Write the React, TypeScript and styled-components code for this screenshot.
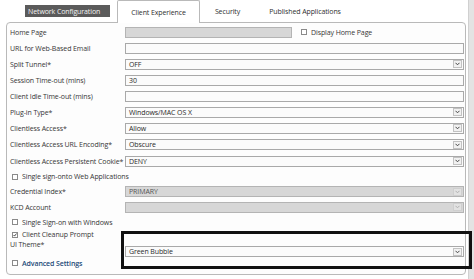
import React from "react";
import styled, { createGlobalStyle } from "styled-components";

const Global = createGlobalStyle`
  html, body { margin: 0; padding: 0; background: #ffffff; }
  body { font-family: "Open Sans", "Noto Sans", sans-serif; font-size: 7px; letter-spacing: -0.1px; color: #333; }
  * { box-sizing: border-box; }
`;

const Page = styled.div`
  position: relative;
  width: 474px;
  height: 279px;
  display: flex;
  overflow: hidden;
`;

const Main = styled.div`
  flex: 1;
  padding: 0 2px 0 6px;
  display: flex;
  flex-direction: column;
`;

const ScrollStrip = styled.div`
  width: 6px;
  background: #e3e3e3;
  border-left: 1px solid #d0d0d0;
`;

const TabBar = styled.div`
  height: 22px;
  display: flex;
  align-items: stretch;
  position: relative;
  z-index: 1;
`;

const Tab = styled.div<{ $w: number; $active?: boolean }>`
  width: ${(p) => p.$w}px;
  display: flex;
  align-items: center;
  justify-content: center;
  color: #2f2f2f;
  ${(p) =>
    p.$active
      ? `background:#ffffff;border:1px solid #b9b9b9;border-bottom:none;border-radius:2px 2px 0 0;height:23px;`
      : ``}
`;

const FirstTab = styled.div`
  width: 111px;
  padding: 5px 0 0 19px;
`;

const Highlight = styled.div`
  width: 85px;
  height: 12px;
  background: #5b5b5b;
  color: #f4f4f4;
  display: flex;
  align-items: center;
  padding-left: 3px;
`;

const Panel = styled.div`
  height: 253px;
  border: 1px solid #b9b9b9;
  border-radius: 4px;
  background: #fdfdfd;
  padding: 1px 1px 0 3px;
  display: flex;
  flex-direction: column;
`;

const Row = styled.div<{ $h: number; $top?: boolean }>`
  height: ${(p) => p.$h}px;
  display: grid;
  grid-template-columns: 115px 1fr;
  align-items: ${(p) => (p.$top ? "stretch" : "center")};
`;

const Label = styled.div<{ $top?: boolean }>`
  color: #363636;
  white-space: nowrap;
  align-self: ${(p) => (p.$top ? "start" : "center")};
`;

const Field = styled.div<{ $disabled?: boolean; $bottom?: boolean }>`
  height: 11px;
  border: 1px solid ${(p) => (p.$disabled ? "#b4b4b4" : "#a9a9a9")};
  background: ${(p) => (p.$disabled ? "#d7d7d7" : "#fbfbfb")};
  display: flex;
  align-items: center;
  padding-left: 3px;
  white-space: nowrap;
  ${(p) => (p.$bottom ? "align-self: end; margin-bottom: 1px;" : "")}
`;

const FieldText = styled.span<{ $disabled?: boolean }>`
  flex: 1;
  color: ${(p) => (p.$disabled ? "#555" : "#2a2a2a")};
`;

const ArrowBox = styled.div<{ $disabled?: boolean }>`
  width: 9px;
  height: 8px;
  margin-right: 1px;
  border: 1px solid ${(p) => (p.$disabled ? "#cfcfcf" : "#c2c2c2")};
  background: ${(p) => (p.$disabled ? "#e2e2e2" : "#f1f1f1")};
  display: flex;
  align-items: center;
  justify-content: center;
`;

const HomeWrap = styled.div`
  display: flex;
  align-items: center;
`;

const HomeField = styled(Field)`
  width: 167px;
  margin-right: 9px;
`;

const CheckRow = styled.div<{ $h: number }>`
  height: ${(p) => p.$h}px;
  display: flex;
  align-items: center;
  padding-left: 2px;
`;

const Box = styled.div`
  width: 6px;
  height: 6px;
  border: 1px solid #8a8a8a;
  background: #fff;
  margin-right: 4px;
  display: flex;
  align-items: center;
  justify-content: center;
`;

const CheckText = styled.span<{ $link?: boolean }>`
  color: ${(p) => (p.$link ? "#1c4a78" : "#363636")};
  font-weight: ${(p) => (p.$link ? 600 : 400)};
  white-space: nowrap;
`;

const InlineCheck = styled.div`
  display: flex;
  align-items: center;
`;

const Annotation = styled.div`
  position: absolute;
  left: 121px;
  top: 231px;
  width: 351px;
  height: 38px;
  border: 3px solid #111;
  pointer-events: none;
`;

const Chevron = ({ disabled }: { disabled?: boolean }) => (
  <svg width="5" height="4" viewBox="0 0 5 4">
    <path d="M0.5 0.8 L2.5 2.8 L4.5 0.8" fill="none" stroke={disabled ? "#b0b0b0" : "#444"} strokeWidth="1" />
  </svg>
);

const Check = () => (
  <svg width="6" height="6" viewBox="0 0 6 6">
    <path d="M0.8 3 L2.3 4.6 L5.3 0.8" fill="none" stroke="#222" strokeWidth="1.2" />
  </svg>
);

const Select = ({ value, disabled, bottom }: { value: string; disabled?: boolean; bottom?: boolean }) => (
  <Field $disabled={disabled} $bottom={bottom}>
    <FieldText $disabled={disabled}>{value}</FieldText>
    <ArrowBox $disabled={disabled}>
      <Chevron disabled={disabled} />
    </ArrowBox>
  </Field>
);

const Input = ({ value }: { value?: string }) => (
  <Field>
    <FieldText>{value}</FieldText>
  </Field>
);

export default function App() {
  return (
    <>
      <Global />
      <Page>
        <Main>
          <TabBar>
            <FirstTab>
              <Highlight>Network Configuration</Highlight>
            </FirstTab>
            <Tab $w={83} $active>
              Client Experience
            </Tab>
            <Tab $w={55}>Security</Tab>
            <Tab $w={100}>Published Applications</Tab>
          </TabBar>
          <Panel>
            <Row $h={16}>
              <Label>Home Page</Label>
              <HomeWrap>
                <HomeField $disabled />
                <InlineCheck>
                  <Box />
                  <CheckText>Display Home Page</CheckText>
                </InlineCheck>
              </HomeWrap>
            </Row>
            <Row $h={16}>
              <Label>URL for Web-Based Email</Label>
              <Input />
            </Row>
            <Row $h={16}>
              <Label>Split Tunnel*</Label>
              <Select value="OFF" />
            </Row>
            <Row $h={16}>
              <Label>Session Time-out (mins)</Label>
              <Input value="30" />
            </Row>
            <Row $h={16}>
              <Label>Client Idle Time-out (mins)</Label>
              <Input />
            </Row>
            <Row $h={16}>
              <Label>Plug-in Type*</Label>
              <Select value="Windows/MAC OS X" />
            </Row>
            <Row $h={16}>
              <Label>Clientless Access*</Label>
              <Select value="Allow" />
            </Row>
            <Row $h={17}>
              <Label>Clientless Access URL Encoding*</Label>
              <Select value="Obscure" />
            </Row>
            <Row $h={16}>
              <Label>Clientless Access Persistent Cookie*</Label>
              <Select value="DENY" />
            </Row>
            <CheckRow $h={15}>
              <Box />
              <CheckText>Single sign-onto Web Applications</CheckText>
            </CheckRow>
            <Row $h={15}>
              <Label>Credential Index*</Label>
              <Select value="PRIMARY" disabled />
            </Row>
            <Row $h={16}>
              <Label>KCD Account</Label>
              <Select value="" disabled />
            </Row>
            <CheckRow $h={14}>
              <Box />
              <CheckText>Single Sign-on with Windows</CheckText>
            </CheckRow>
            <CheckRow $h={11}>
              <Box>
                <Check />
              </Box>
              <CheckText>Client Cleanup Prompt</CheckText>
            </CheckRow>
            <Row $h={18} $top>
              <Label $top>UI Theme*</Label>
              <Select value="Green Bubble" bottom />
            </Row>
            <CheckRow $h={10}>
              <Box />
              <CheckText $link>Advanced Settings</CheckText>
            </CheckRow>
          </Panel>
        </Main>
        <ScrollStrip />
        <Annotation />
      </Page>
    </>
  );
}
